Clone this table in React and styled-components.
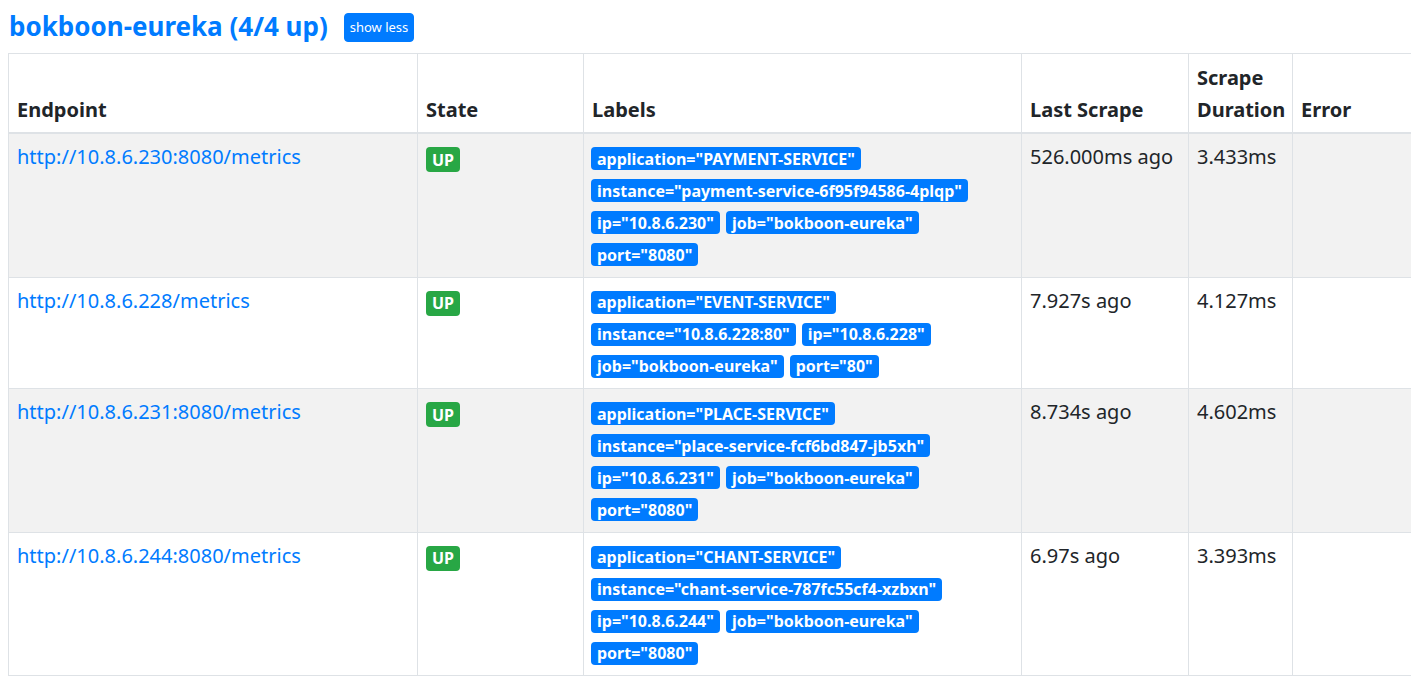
import React from 'react'
import styled, { createGlobalStyle } from 'styled-components'

const GlobalStyle = createGlobalStyle`
  html, body {
    margin: 0;
    overflow: hidden;
    background: #fff;
  }
  body {
    padding-left: 8px;
    font-family: "Noto Sans", "Open Sans", sans-serif;
    color: #212529;
  }
`

const Header = styled.div`
  display: flex;
  align-items: center;
  gap: 16px;
  height: 53px;
  padding-left: 1px;
`

const Title = styled.h2`
  margin: 0;
  font-size: 26px;
  font-weight: 700;
  line-height: 1.2;
  color: #007bff;
`

const ToggleButton = styled.button`
  font-family: inherit;
  font-size: 13px;
  line-height: 21px;
  color: #fff;
  background: #007bff;
  border: 1px solid #007bff;
  border-radius: 4px;
  padding: 3px 5px;
  margin-top: 2px;
  cursor: pointer;
`

const Table = styled.table`
  width: 1420px;
  table-layout: fixed;
  border-collapse: collapse;
  font-size: 20px;
  line-height: 32px;
`

const Th = styled.th`
  box-sizing: border-box;
  width: ${p => p.w ? `${p.w}px` : 'auto'};
  text-align: left;
  vertical-align: bottom;
  font-weight: 700;
  padding: 8px 7px 6px 8px;
  border: 1px solid #dee2e6;
  border-bottom-width: 2px;
`

const Row = styled.tr`
  background: ${p => p.striped ? '#f2f2f2' : '#fff'};
`

const Td = styled.td`
  vertical-align: top;
  padding: 7px 7px 7px 8px;
  border: 1px solid #dee2e6;
`

const EndpointLink = styled.a`
  color: #007bff;
  text-decoration: none;
`

const Labels = styled.div`
  display: flex;
  flex-wrap: wrap;
  gap: 9px 6px;
  padding: 6px 0 3.5px;
  margin-left: -1px;
`

const Badge = styled.span`
  display: inline-block;
  box-sizing: border-box;
  height: 23px;
  font-size: 16px;
  font-weight: 700;
  line-height: 16px;
  padding: 3.5px 6px;
  border-radius: 4px;
  color: #fff;
  background: ${p => p.success ? '#28a745' : '#007bff'};
  white-space: nowrap;
`

const StateBadge = styled(Badge)`
  margin-top: 6px;
  height: 25px;
  padding: 4.5px 6px;
`

const targets = [
  {
    url: 'http://10.8.6.230:8080/metrics',
    labels: ['application="PAYMENT-SERVICE"', 'instance="payment-service-6f95f94586-4plqp"', 'ip="10.8.6.230"', 'job="bokboon-eureka"', 'port="8080"'],
    last: '526.000ms ago',
    duration: '3.433ms',
  },
  {
    url: 'http://10.8.6.228/metrics',
    labels: ['application="EVENT-SERVICE"', 'instance="10.8.6.228:80"', 'ip="10.8.6.228"', 'job="bokboon-eureka"', 'port="80"'],
    last: '7.927s ago',
    duration: '4.127ms',
  },
  {
    url: 'http://10.8.6.231:8080/metrics',
    labels: ['application="PLACE-SERVICE"', 'instance="place-service-fcf6bd847-jb5xh"', 'ip="10.8.6.231"', 'job="bokboon-eureka"', 'port="8080"'],
    last: '8.734s ago',
    duration: '4.602ms',
  },
  {
    url: 'http://10.8.6.244:8080/metrics',
    labels: ['application="CHANT-SERVICE"', 'instance="chant-service-787fc55cf4-xzbxn"', 'ip="10.8.6.244"', 'job="bokboon-eureka"', 'port="8080"'],
    last: '6.97s ago',
    duration: '3.393ms',
  },
]

const App = () => {
  return (
    <React.Fragment>
      <GlobalStyle />
      <Header>
        <Title>bokboon-eureka (4/4 up)</Title>
        <ToggleButton>show less</ToggleButton>
      </Header>
      <Table>
        <thead>
          <tr>
            <Th w={409}>Endpoint</Th>
            <Th w={166}>State</Th>
            <Th w={438}>Labels</Th>
            <Th w={167}>Last Scrape</Th>
            <Th w={104}>Scrape Duration</Th>
            <Th>Error</Th>
          </tr>
        </thead>
        <tbody>
          {targets.map((t, i) => (
            <Row key={t.url} striped={i % 2 === 0}>
              <Td><EndpointLink href="#">{t.url}</EndpointLink></Td>
              <Td><StateBadge success>UP</StateBadge></Td>
              <Td>
                <Labels>
                  {t.labels.map(l => <Badge key={l}>{l}</Badge>)}
                </Labels>
              </Td>
              <Td>{t.last}</Td>
              <Td>{t.duration}</Td>
              <Td />
            </Row>
          ))}
        </tbody>
      </Table>
    </React.Fragment>
  )
}

export default App
